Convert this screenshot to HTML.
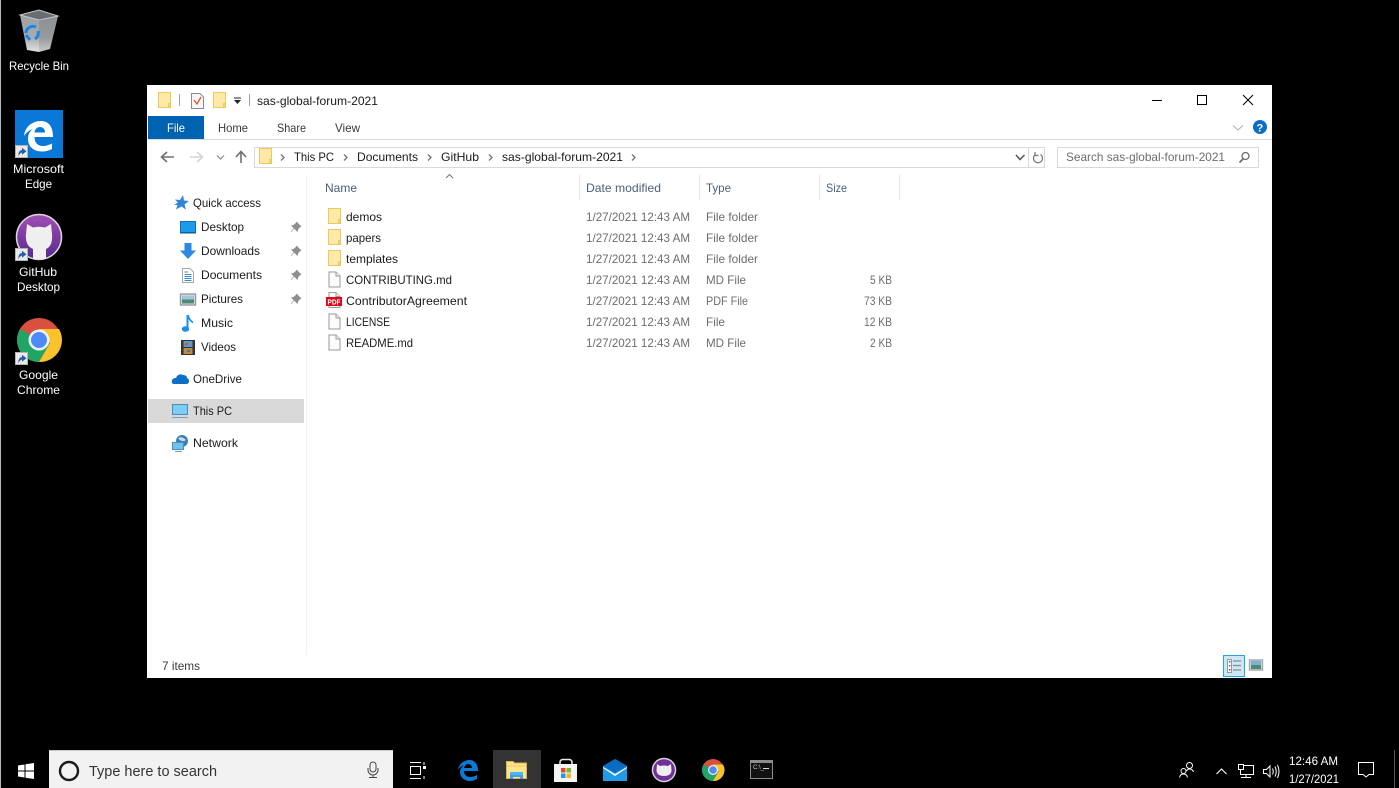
<!DOCTYPE html>
<html><head><meta charset="utf-8"><title>sas-global-forum-2021</title>
<style>
html,body{margin:0;padding:0;background:#000;width:1399px;height:788px;overflow:hidden}
svg{display:block;position:absolute;left:0;top:0}
text{font-family:"Liberation Sans",sans-serif;font-size:12px;fill:#1a1a1a}
.w{fill:#fff}
.g{fill:#6d6d6d}
.h{fill:#4c607a}
.d{fill:#6d6d6d}
</style></head><body>
<svg width="1399" height="788" viewBox="0 0 1399 788" xmlns="http://www.w3.org/2000/svg">
<defs>
<linearGradient id="ghp" x1="0" y1="0" x2="0" y2="1"><stop offset="0" stop-color="#a24fb4"/><stop offset="1" stop-color="#57288e"/></linearGradient>
<linearGradient id="binb" x1="0" y1="0" x2="0" y2="1"><stop offset="0" stop-color="#9a9ea1"/><stop offset=".65" stop-color="#a8acae"/><stop offset="1" stop-color="#e0e2e3"/></linearGradient>
<g id="fold"><rect x=".5" y=".5" width="12" height="15" fill="#fee9a9" stroke="#eac95f"/><path d="M10.500 15.500V11.500H12.500V15.500Z" fill="#f5d679" stroke="#e6c256" stroke-width=".7"/></g>
<g id="file"><path d="M.5.5H7.500L11.500 4.500V15.500H.5Z" fill="#fcfcfc" stroke="#9a9a9a"/><path d="M7.500 .5V4.500H11.500" fill="#f0f0f0" stroke="#9a9a9a"/></g>
<g id="pin"><path d="M5.500 0L10 4.500 8.800 5 6.800 7.400 6.500 9.500 .5 3.700 2.700 3.200 5 1.200ZM3 6.500L0 9.800" fill="#8f8f8f" stroke="#8f8f8f" stroke-width=".6"/></g>
<g id="sc"><rect x=".5" y=".5" width="12" height="12" fill="#eaeaea" stroke="#b5b5b5"/><path d="M3.500 11C3 7.500 4.700 5 7 5V2.800L11.500 6.300 7 9.800V7.700C5.500 7.700 4.500 9 3.500 11Z" fill="#2a5fa6"/></g>
</defs>

<rect width="1399" height="788" fill="#000"/>
<rect x="0" y="0" width="1" height="788" fill="#b8b8b8"/>

<!-- Recycle bin -->
<path d="M20 15L39 10 58 16 50 49 39 52 27 50Z" fill="url(#binb)"/>
<path d="M20 15L39 10 58 16 39 20Z" fill="#6a6d70" stroke="#c4c7c8" stroke-width="1"/>
<path d="M39 20L57 17 50 49 39 52Z" fill="#000" opacity=".1"/>
<g fill="none" stroke="#1c86e0" stroke-width="3"><path d="M26 33A7 7 0 0 1 36 27"/><path d="M38 31A7 7 0 0 1 35 39"/><path d="M26 35L30 40"/></g>
<text class="w" x="9" y="70" textLength="60" lengthAdjust="spacingAndGlyphs">Recycle Bin</text>

<!-- Edge -->
<rect x="15" y="110" width="48" height="48" fill="#0a78d7"/>
<path d="M24 136C25 126 33 121 41 121C49 121 53 127 53 137H34.500C34.500 143 38 146 43 146C46 146 49 145 52 143.500V149C48 151 45 151.500 42 151.500C33 151.500 28 146 28 139C28 134 30 131 33 129C29 130 26 133 24 136ZM34.500 132.500H45C45 129 43 127 40 127C37 127 35 129 34.500 132.500Z" fill="#fff"/>
<use href="#sc" x="15" y="145"/>
<text class="w" x="13" y="173" textLength="51" lengthAdjust="spacingAndGlyphs">Microsoft</text>
<text class="w" x="25" y="188" textLength="27" lengthAdjust="spacingAndGlyphs">Edge</text>

<!-- GitHub Desktop -->
<circle cx="39" cy="237" r="22.500" fill="url(#ghp)" stroke="#dcd6e0" stroke-width="1.500"/>
<path d="M27 224L33 227.500Q39 226 45 227.500L51 224 52 234Q53 246 46 249V258.500Q39 260 33 258.500V249Q25 246 26 234Z" fill="#efefef"/>
<use href="#sc" x="15" y="248"/>
<text class="w" x="19" y="276" textLength="38" lengthAdjust="spacingAndGlyphs">GitHub</text>
<text class="w" x="17" y="291" textLength="43" lengthAdjust="spacingAndGlyphs">Desktop</text>

<!-- Chrome -->
<circle cx="39" cy="340" r="22" fill="#d9503f"/>
<path d="M39 340L20 329A22 22 0 0 0 39 362L50 343Z" fill="#21a565"/>
<path d="M39 329H59A22 22 0 0 1 39 362L50 343Z" fill="#fbc22d"/>
<circle cx="39" cy="340" r="10.500" fill="#eef2f8"/><circle cx="39" cy="340" r="8" fill="#4c8bf5"/>
<use href="#sc" x="15" y="352"/>
<text class="w" x="19" y="379" textLength="39" lengthAdjust="spacingAndGlyphs">Google</text>
<text class="w" x="17" y="394" textLength="43" lengthAdjust="spacingAndGlyphs">Chrome</text>

<!-- Window -->
<rect x="147" y="85" width="1125" height="593" fill="#fff"/>
<!-- title bar -->
<use href="#fold" x="158" y="92"/>
<rect x="179" y="94" width="1" height="12" fill="#a0a0a0"/>
<path d="M191.500 93.500H200L203.500 97V108.500H191.500Z" fill="#f7f7f7" stroke="#8c8c8c"/><path d="M194 100L197 104 201 97" fill="none" stroke="#e0522d" stroke-width="1.300"/>
<use href="#fold" x="213" y="92"/>
<path d="M234 97.500H241V98.500H234ZM234 100H241L237.500 104Z" fill="#222"/>
<rect x="249" y="94" width="1" height="12" fill="#a0a0a0"/>
<text x="257" y="105" textLength="121" lengthAdjust="spacingAndGlyphs">sas-global-forum-2021</text>
<rect x="1152" y="100" width="10" height="1" fill="#000"/>
<rect x="1197.500" y="95.500" width="9" height="9" fill="none" stroke="#000"/>
<path d="M1243 95L1253 105M1253 95L1243 105" stroke="#000" fill="none"/>

<!-- ribbon tabs -->
<rect x="148" y="116" width="56" height="23" fill="#0063b1"/>
<text x="167" y="132" textLength="18" lengthAdjust="spacingAndGlyphs" style="fill:#fff">File</text>
<text x="218" y="132" textLength="30" lengthAdjust="spacingAndGlyphs" style="fill:#3a3a3a">Home</text>
<text x="277" y="132" textLength="29" lengthAdjust="spacingAndGlyphs" style="fill:#3a3a3a">Share</text>
<text x="335" y="132" textLength="25" lengthAdjust="spacingAndGlyphs" style="fill:#3a3a3a">View</text>
<rect x="148" y="139" width="1124" height="1" fill="#dadada"/>
<path d="M1233 125.500L1238 130 1243 125.500" fill="none" stroke="#a8b0b8"/>
<circle cx="1260" cy="127" r="7" fill="#0a6fc2"/>
<text x="1256.500" y="131.500" style="font-size:11px;font-weight:bold;fill:#fff">?</text>

<!-- nav buttons -->
<path d="M167 152L161.500 157 167 162M162 157H174" fill="none" stroke="#6f6f6f" stroke-width="1.600"/>
<path d="M197 152L202.500 157 197 162M202 157H190" fill="none" stroke="#d4d4d4" stroke-width="1.600"/>
<path d="M217 155.500L220.500 159 224 155.500" fill="none" stroke="#8a8a8a" stroke-width="1.200"/>
<path d="M236 157L241 151.500 246 157M241 152V163" fill="none" stroke="#6f6f6f" stroke-width="1.600"/>

<!-- address bar -->
<rect x="254.500" y="147.500" width="790" height="20" fill="#fff" stroke="#d9d9d9"/>
<rect x="1028" y="148" width="1" height="19" fill="#d9d9d9"/>
<use href="#fold" x="259" y="148"/>
<g fill="none" stroke="#777" stroke-width="1.400">
<path d="M281 154.500L284 157.500 281 160.500"/><path d="M344 154.500L347 157.500 344 160.500"/><path d="M428 154.500L431 157.500 428 160.500"/><path d="M489 154.500L492 157.500 489 160.500"/><path d="M632 154.500L635 157.500 632 160.500"/>
</g>
<text x="294" y="161" textLength="40" lengthAdjust="spacingAndGlyphs">This PC</text>
<text x="357" y="161" textLength="61" lengthAdjust="spacingAndGlyphs">Documents</text>
<text x="441" y="161" textLength="38" lengthAdjust="spacingAndGlyphs">GitHub</text>
<text x="502" y="161" textLength="121" lengthAdjust="spacingAndGlyphs">sas-global-forum-2021</text>
<path d="M1016 155L1020 159.500 1024.500 155" fill="none" stroke="#555" stroke-width="1.500"/>
<path d="M1040.500 154.500A4.500 4.500 0 1 1 1035.500 154.500M1035 152V155.500H1038.500" fill="none" stroke="#777" stroke-width="1.200"/>
<rect x="1057.500" y="147.500" width="201" height="20" fill="#fff" stroke="#d9d9d9"/>
<text class="g" x="1066" y="161" textLength="159" lengthAdjust="spacingAndGlyphs">Search sas-global-forum-2021</text>
<circle cx="1245.500" cy="156" r="3.500" fill="none" stroke="#6a6a6a" stroke-width="1.300"/><path d="M1243 159L1239.500 162.500" stroke="#6a6a6a" stroke-width="1.700"/>

<!-- nav pane -->
<rect x="306" y="175" width="1" height="480" fill="#f2f2f2"/>
<path d="M183 195L184 200.500 189 201 184.500 204.500 186 209.500 181.500 206.500 176 209.500 177.500 205 174 205 178 202.500 175 199.500 180 200Z" fill="#2f86d8"/>
<text x="193" y="207" textLength="68" lengthAdjust="spacingAndGlyphs">Quick access</text>

<rect x="180.500" y="221.500" width="15" height="11" fill="#1e9be8" stroke="#0f6fb8"/><rect x="180" y="232" width="16" height="1.500" fill="#0f5f9e"/>
<text x="201" y="231" textLength="43" lengthAdjust="spacingAndGlyphs">Desktop</text>
<use href="#pin" x="291" y="222"/>

<path d="M184.500 243H191.500V250.500H196L188 259 180 250.500H184.500Z" fill="#2c8ae0"/>
<text x="201" y="255" textLength="59" lengthAdjust="spacingAndGlyphs">Downloads</text>
<use href="#pin" x="291" y="246"/>

<path d="M182.500 268.500H190L193.500 272V282.500H182.500Z" fill="#fff" stroke="#a8a8a8"/><path d="M184.500 272H188M184.500 274.500H191.500M184.500 276.500H191.500M184.500 278.500H191.500M184.500 280.500H191.500" stroke="#3a87c8"/>
<text x="201" y="279" textLength="61" lengthAdjust="spacingAndGlyphs">Documents</text>
<use href="#pin" x="291" y="270"/>

<rect x="180.500" y="294" width="15" height="11" fill="#d8e4ea" stroke="#999" stroke-width="1.400"/><rect x="182" y="299.500" width="12" height="4" fill="#4d8a78"/><rect x="182" y="295.500" width="12" height="4" fill="#a6c6dc"/>
<text x="201" y="303" textLength="42" lengthAdjust="spacingAndGlyphs">Pictures</text>
<use href="#pin" x="291" y="294"/>

<path d="M187.500 315V329" stroke="#1f8ee6" stroke-width="2" fill="none"/><ellipse cx="185.500" cy="329" rx="3.700" ry="2.800" fill="#1f8ee6"/><path d="M188 315Q189 320 193 322.500" stroke="#1f8ee6" stroke-width="1.700" fill="none"/>
<text x="201" y="327" textLength="32" lengthAdjust="spacingAndGlyphs">Music</text>

<rect x="181" y="340" width="14" height="15" fill="#333"/><rect x="183.500" y="341" width="9" height="6" fill="#5d9ac8"/><rect x="183.500" y="348" width="9" height="6" fill="#c08a38"/><rect x="185" y="343" width="3" height="2" fill="#d8502a"/><rect x="187" y="350" width="3" height="2" fill="#3a7ab8"/>
<text x="201" y="351" textLength="35" lengthAdjust="spacingAndGlyphs">Videos</text>

<path d="M174 384Q171 384 172 380Q173 378 176 378Q178 373 183 375Q187 375 187 378Q189 379 189 381Q189 384 186 384Z" fill="#0f6fc6"/>
<text x="193" y="383" textLength="49" lengthAdjust="spacingAndGlyphs">OneDrive</text>

<rect x="148" y="399" width="156" height="24" fill="#d9d9d9"/>
<rect x="172.500" y="404.500" width="15" height="10" fill="#7fcdf5" stroke="#4a8dc0"/><rect x="172" y="417" width="16" height="1" fill="#7d9cb8"/>
<text x="193" y="415" textLength="39" lengthAdjust="spacingAndGlyphs">This PC</text>

<circle cx="182" cy="441" r="6" fill="#3d7fb5"/><path d="M178 438Q182 436 186 440Q182 443 178 438Z" fill="#c4e0ee"/>
<rect x="172.500" y="442.500" width="11" height="7" fill="#6ec3ee" stroke="#4a8dc0"/><rect x="175" y="451" width="7" height="1" fill="#7d9cb8"/>
<text x="193" y="447" textLength="45" lengthAdjust="spacingAndGlyphs">Network</text>

<!-- column headers -->
<path d="M446 178L449.500 174.500 453 178" fill="none" stroke="#777"/>
<g fill="#e5e5e5"><rect x="579" y="175" width="1" height="25"/><rect x="699" y="175" width="1" height="25"/><rect x="819" y="175" width="1" height="25"/><rect x="899" y="175" width="1" height="25"/></g>
<text class="h" x="325" y="192" textLength="32" lengthAdjust="spacingAndGlyphs">Name</text>
<text class="h" x="586" y="192" textLength="75" lengthAdjust="spacingAndGlyphs">Date modified</text>
<text class="h" x="706" y="192" textLength="25" lengthAdjust="spacingAndGlyphs">Type</text>
<text class="h" x="826" y="192" textLength="21" lengthAdjust="spacingAndGlyphs">Size</text>

<!-- rows -->
<use href="#fold" x="328" y="208"/>
<text x="346" y="221" textLength="36" lengthAdjust="spacingAndGlyphs">demos</text>
<use href="#fold" x="328" y="229"/>
<text x="346" y="242" textLength="35" lengthAdjust="spacingAndGlyphs">papers</text>
<use href="#fold" x="328" y="250"/>
<text x="346" y="263" textLength="52" lengthAdjust="spacingAndGlyphs">templates</text>
<use href="#file" x="328.500" y="271.500"/>
<text x="346" y="284" textLength="106" lengthAdjust="spacingAndGlyphs">CONTRIBUTING.md</text>
<use href="#file" x="328.500" y="292"/>
<rect x="326" y="297" width="16" height="9" fill="#d8071c"/>
<text x="327.500" y="304.500" style="font-size:7.500px;font-weight:bold;fill:#fff" textLength="13" lengthAdjust="spacingAndGlyphs">PDF</text>
<text x="346" y="305" textLength="121" lengthAdjust="spacingAndGlyphs">ContributorAgreement</text>
<use href="#file" x="328.500" y="313.500"/>
<text x="346" y="326" textLength="44" lengthAdjust="spacingAndGlyphs">LICENSE</text>
<use href="#file" x="328.500" y="334.500"/>
<text x="346" y="347" textLength="67" lengthAdjust="spacingAndGlyphs">README.md</text>

<text class="d" x="586" y="221" textLength="104" lengthAdjust="spacingAndGlyphs">1/27/2021 12:43 AM</text>
<text class="d" x="586" y="242" textLength="104" lengthAdjust="spacingAndGlyphs">1/27/2021 12:43 AM</text>
<text class="d" x="586" y="263" textLength="104" lengthAdjust="spacingAndGlyphs">1/27/2021 12:43 AM</text>
<text class="d" x="586" y="284" textLength="104" lengthAdjust="spacingAndGlyphs">1/27/2021 12:43 AM</text>
<text class="d" x="586" y="305" textLength="104" lengthAdjust="spacingAndGlyphs">1/27/2021 12:43 AM</text>
<text class="d" x="586" y="326" textLength="104" lengthAdjust="spacingAndGlyphs">1/27/2021 12:43 AM</text>
<text class="d" x="586" y="347" textLength="104" lengthAdjust="spacingAndGlyphs">1/27/2021 12:43 AM</text>
<text class="d" x="706" y="221" textLength="52" lengthAdjust="spacingAndGlyphs">File folder</text>
<text class="d" x="706" y="242" textLength="52" lengthAdjust="spacingAndGlyphs">File folder</text>
<text class="d" x="706" y="263" textLength="52" lengthAdjust="spacingAndGlyphs">File folder</text>
<text class="d" x="706" y="284" textLength="40" lengthAdjust="spacingAndGlyphs">MD File</text>
<text class="d" x="706" y="305" textLength="42" lengthAdjust="spacingAndGlyphs">PDF File</text>
<text class="d" x="706" y="326" textLength="19" lengthAdjust="spacingAndGlyphs">File</text>
<text class="d" x="706" y="347" textLength="40" lengthAdjust="spacingAndGlyphs">MD File</text>
<text class="d" x="870" y="284" textLength="22" lengthAdjust="spacingAndGlyphs">5 KB</text>
<text class="d" x="864" y="305" textLength="28" lengthAdjust="spacingAndGlyphs">73 KB</text>
<text class="d" x="864" y="326" textLength="28" lengthAdjust="spacingAndGlyphs">12 KB</text>
<text class="d" x="870" y="347" textLength="22" lengthAdjust="spacingAndGlyphs">2 KB</text>

<!-- status -->
<text x="162" y="670" textLength="38" lengthAdjust="spacingAndGlyphs" style="fill:#3a3a3a">7 items</text>
<rect x="1223.500" y="655.500" width="21" height="21" fill="#cce8f6" stroke="#2aa0dc"/>
<rect x="1227.500" y="659.500" width="4" height="13" fill="#fff" stroke="#999"/>
<rect x="1229" y="661" width="1.500" height="1.500" fill="#555"/><rect x="1229" y="665" width="1.500" height="1.500" fill="#2a7ac8"/><rect x="1229" y="669" width="1.500" height="1.500" fill="#b83030"/>
<path d="M1233 661H1241M1233 665.500H1241M1233 670H1241" stroke="#888" stroke-width="1.300"/>
<rect x="1249.500" y="660" width="13" height="10" fill="#d4e4ec" stroke="#a0a0a0" stroke-width="1.300"/><rect x="1251" y="661" width="10" height="4" fill="#7fb0d0"/><rect x="1251" y="665" width="10" height="4" fill="#4d8a78"/>

<!-- Taskbar -->
<path d="M18 765.500L24.500 764.500V770.500H18ZM25.500 764.300L34 763V770.500H25.500ZM18 771.500H24.500V777.500L18 776.500ZM25.500 771.500H34V779L25.500 777.700Z" fill="#fff"/>
<rect x="49" y="750" width="344" height="38" fill="#f2f2f2"/>
<rect x="49" y="750" width="344" height="1" fill="#c8c8c8"/>
<circle cx="69" cy="771" r="9" fill="none" stroke="#1a1a1a" stroke-width="2.400"/>
<text x="89" y="776" textLength="128" lengthAdjust="spacingAndGlyphs" style="font-size:15px;fill:#333">Type here to search</text>
<rect x="370" y="762" width="6" height="10" rx="3" fill="none" stroke="#444"/><path d="M368 768V770A5 5 0 0 0 378 770V768M373 775V777M369 777.500H377" fill="none" stroke="#444"/>

<g fill="none" stroke="#fff"><rect x="410.500" y="766.500" width="10" height="8"/><path d="M410 762.500H421M410 778.500H421M424 762V765M424 776V779"/></g><rect x="423" y="766" width="3" height="3" fill="#fff"/>

<path d="M458 770C459 763 465 760 470 760C475 760 478 765 478 771H464C464 775 467 777 470 777C473 777 475 776 477 775V779C474 780.500 472 781 470 781C464 781 460 777 460 772C460 769 462 767 464 765.500C461 766 459 768 458 770ZM464 768H472C472 765.500 470 764 468 764C466 764 465 765.500 464 768Z" fill="#0a7ad7"/>

<rect x="493" y="750" width="48" height="38" fill="#333"/>
<path d="M506.500 761.500H513L514.500 763H526.500V778.500H506.500Z" fill="#fce38f" stroke="#d9b355"/>
<path d="M507 766H526" stroke="#f0c95c"/>
<path d="M510 775H523V779H520V777H513V779H510Z" fill="#3aa0e8"/><rect x="510" y="772" width="13" height="3" fill="#4cb4f0"/>

<path d="M560 767V762.500Q560 759.500 563 759.500H569Q572 759.500 572 762.500V767" fill="none" stroke="#e8e8e8" stroke-width="1.500"/>
<rect x="554" y="764" width="23" height="18" fill="#f4f4f4"/>
<rect x="561" y="768" width="4.500" height="4.500" fill="#e8452c"/><rect x="566.500" y="768" width="4.500" height="4.500" fill="#6fb92a"/><rect x="561" y="773.500" width="4.500" height="4.500" fill="#1f97e8"/><rect x="566.500" y="773.500" width="4.500" height="4.500" fill="#f9b41c"/>

<path d="M603 766L615 759 627 766V781H603Z" fill="#1f9be8"/>
<path d="M603 766L615 759 627 766 615 773Z" fill="#0a6cc0"/>
<path d="M603 767L615 774 627 767 627 768 615 776 603 768Z" fill="#fff"/>

<circle cx="664" cy="770" r="11.500" fill="#6f2f98" stroke="#d8d2dc" stroke-width="1.500"/>
<path d="M657 764L660 766Q664 765 668 766L671 764 671.500 770Q671.500 776 664 776Q656.500 776 656.500 770Z" fill="#eee"/>

<circle cx="713" cy="770" r="11" fill="#d9503f"/>
<path d="M713 770L703.500 764.500A11 11 0 0 0 713 781L718.500 771.500Z" fill="#21a565"/>
<path d="M713 764.500H723A11 11 0 0 1 713 781L718.500 771.500Z" fill="#fbc22d"/>
<circle cx="713" cy="770" r="5" fill="#eef2f8"/><circle cx="713" cy="770" r="3.800" fill="#4c8bf5"/>

<rect x="750.500" y="760.500" width="22" height="18" fill="#111" stroke="#8c8c8c"/>
<rect x="751" y="761" width="21" height="2" fill="#8c8c8c"/>
<text x="753" y="769" style="font-size:6px;fill:#ccc">C:\_</text><rect x="763" y="768" width="6" height="1" fill="#ddd"/>

<!-- tray -->
<g fill="none" stroke="#fff">
<circle cx="1189.500" cy="765.500" r="3"/><path d="M1186.500 771Q1187.500 769 1189.500 769Q1192.500 769 1193.500 772"/>
<circle cx="1183.500" cy="771" r="2.500"/><path d="M1179.500 777.500Q1180 774 1183.500 774Q1187 774 1187.500 777.500"/>
<path d="M1216.500 774L1221.500 769 1226.500 774" stroke-width="1.100"/>
<rect x="1240.500" y="765.500" width="13" height="9"/><rect x="1238.500" y="764.500" width="5" height="5" fill="#000"/><path d="M1246 775V777.500M1241 777.500H1251"/>
<path d="M1263.500 769.500H1266.500L1270 766V777L1266.500 773.500H1263.500ZM1272.500 768.500Q1274 771.500 1272.500 774.500M1275 766.500Q1277.500 771.500 1275 776.500M1277.500 765Q1280.500 771.500 1277.500 778"/>
<path d="M1358.500 762.500H1373.500V774.500H1369L1366 777 1363 774.500H1358.500Z"/>
</g>
<rect x="1394" y="750" width="1" height="38" fill="#555"/>
<text class="w" x="1289" y="765" textLength="49" lengthAdjust="spacingAndGlyphs">12:46 AM</text>
<text class="w" x="1289" y="783" textLength="50" lengthAdjust="spacingAndGlyphs">1/27/2021</text>
</svg>
</body></html>
